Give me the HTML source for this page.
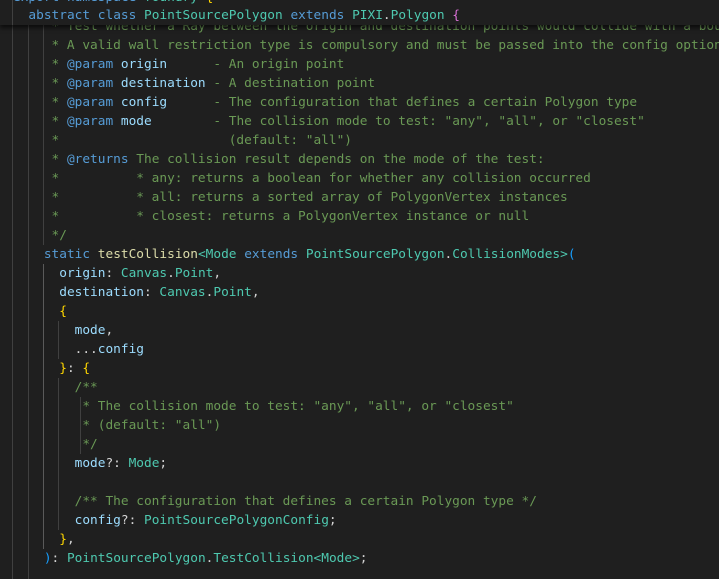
<!DOCTYPE html>
<html><head><meta charset="utf-8"><style>
html,body{margin:0;padding:0;background:#1f1f1f;width:719px;height:579px;overflow:hidden;}
.l{position:absolute;left:13px;height:19px;line-height:19px;white-space:pre;font-family:"DejaVu Sans Mono","Liberation Mono",monospace;font-size:12.8px;color:#d4d4d4;}
.k{color:#569cd6}.t{color:#4ec9b0}.c{color:#6a9955}.v{color:#9cdcfe}.f{color:#dcdcaa}.y{color:#ffd700}.p{color:#da70d6}.b{color:#179fff}
.g{position:absolute;width:1px;background:#404040;}
.hdr{position:absolute;left:0;top:0;width:719px;height:25px;background:#1f1f1f;box-shadow:0 3px 4px rgba(0,0,0,0.6);overflow:hidden;}
</style></head><body>
<div class="g" style="left:12px;top:0;height:579px"></div>
<div class="g" style="left:28px;top:0;height:579px"></div>
<div class="g" style="left:43px;top:17px;height:228px"></div>
<div class="g" style="left:43px;top:264px;height:285px;background:#5a5a5a"></div>
<div class="g" style="left:58px;top:321px;height:38px"></div>
<div class="g" style="left:58px;top:378px;height:152px"></div>
<div class="g" style="left:80px;top:397px;height:57px"></div>

<div class="l c" style="top:17px">     * Test whether a Ray between the origin and destination points would collide with a bou</div>
<div class="l c" style="top:36px">     * A valid wall restriction type is compulsory and must be passed into the config option</div>
<div class="l c" style="top:55px">     * <span class="k">@param</span> <span class="v">origin</span>      - An origin point</div>
<div class="l c" style="top:74px">     * <span class="k">@param</span> <span class="v">destination</span> - A destination point</div>
<div class="l c" style="top:93px">     * <span class="k">@param</span> <span class="v">config</span>      - The configuration that defines a certain Polygon type</div>
<div class="l c" style="top:112px">     * <span class="k">@param</span> <span class="v">mode</span>        - The collision mode to test: "any", "all", or "closest"</div>
<div class="l c" style="top:131px">     *                      (default: "all")</div>
<div class="l c" style="top:150px">     * <span class="k">@returns</span> The collision result depends on the mode of the test:</div>
<div class="l c" style="top:169px">     *          * any: returns a boolean for whether any collision occurred</div>
<div class="l c" style="top:188px">     *          * all: returns a sorted array of PolygonVertex instances</div>
<div class="l c" style="top:207px">     *          * closest: returns a PolygonVertex instance or null</div>
<div class="l c" style="top:226px">     */</div>
<div class="l" style="top:245px">    <span class="k">static</span> <span class="f">testCollision</span><span class="t">&lt;Mode</span> <span class="k">extends</span> <span class="t">PointSourcePolygon</span>.<span class="t">CollisionModes&gt;</span><span class="b">(</span></div>
<div class="l" style="top:264px">      <span class="v">origin</span>: <span class="t">Canvas</span>.<span class="t">Point</span>,</div>
<div class="l" style="top:283px">      <span class="v">destination</span>: <span class="t">Canvas</span>.<span class="t">Point</span>,</div>
<div class="l" style="top:302px">      <span class="y">{</span></div>
<div class="l" style="top:321px">        <span class="v">mode</span>,</div>
<div class="l" style="top:340px">        ...<span class="v">config</span></div>
<div class="l" style="top:359px">      <span class="y">}</span>: <span class="y">{</span></div>
<div class="l c" style="top:378px">        /**</div>
<div class="l c" style="top:397px">         * The collision mode to test: "any", "all", or "closest"</div>
<div class="l c" style="top:416px">         * (default: "all")</div>
<div class="l c" style="top:435px">         */</div>
<div class="l" style="top:454px">        <span class="v">mode</span>?: <span class="t">Mode</span>;</div>
<div class="l c" style="top:492px">        /** The configuration that defines a certain Polygon type */</div>
<div class="l" style="top:511px">        <span class="v">config</span>?: <span class="t">PointSourcePolygonConfig</span>;</div>
<div class="l" style="top:530px">      <span class="y">}</span>,</div>
<div class="l" style="top:549px">    <span class="b">)</span>: <span class="t">PointSourcePolygon</span>.<span class="t">TestCollision</span><span class="t">&lt;Mode&gt;</span>;</div>

<div class="hdr">
<div class="g" style="left:12px;top:0;height:25px"></div>
<div class="l" style="top:-12px"><span class="k">export</span> <span class="k">namespace</span> <span class="t">foundry</span> <span class="y">{</span></div>
<div class="l" style="top:6px">  <span class="k">abstract</span> <span class="k">class</span> <span class="t">PointSourcePolygon</span> <span class="k">extends</span> <span class="t">PIXI</span>.<span class="t">Polygon</span> <span class="p">{</span></div>
</div>
</body></html>
